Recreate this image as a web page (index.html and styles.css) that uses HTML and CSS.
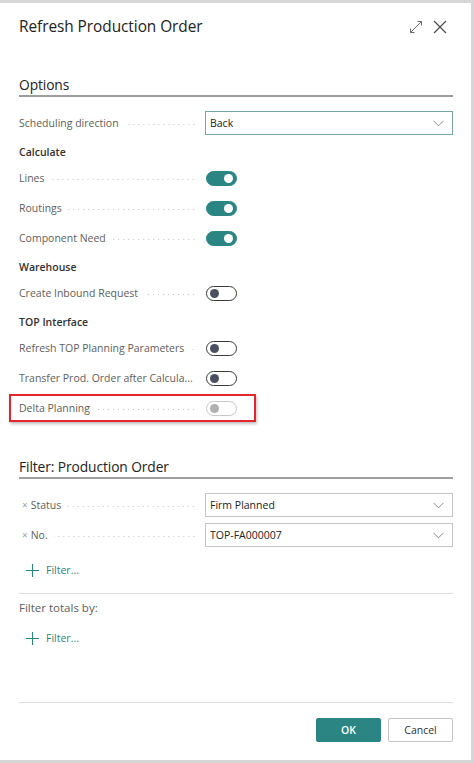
FILE: index.html
```html
<!DOCTYPE html>
<html>
<head>
<meta charset="utf-8">
<link rel="stylesheet" href="styles.css">
</head>
<body>
<div class="dialog">
  <div class="titlebar">
    <div class="title">Refresh Production Order</div>
    <div class="title-icons">
      <svg class="ico" width="14" height="14" viewBox="0 0 14 14"><path d="M1.5 12.5 L12.5 1.5 M1.5 12.5 L1.5 8.5 M1.5 12.5 L5.5 12.5 M12.5 1.5 L8.5 1.5 M12.5 1.5 L12.5 5.5" fill="none" stroke="#6b6b6b" stroke-width="1"/></svg>
      <svg class="ico" width="14" height="14" viewBox="0 0 14 14"><path d="M1 1 L13 13 M13 1 L1 13" fill="none" stroke="#4a4a4a" stroke-width="1.2"/></svg>
    </div>
  </div>

  <div class="content">
    <div class="section-head">Options</div>
    <div class="row">
      <div class="label"><span class="ltext">Scheduling direction</span><span class="dots"></span></div>
      <div class="select focused"><span>Back</span><svg class="chev" width="11" height="7" viewBox="0 0 11 7"><path d="M0.5 0.8 L5.5 5.8 L10.5 0.8" fill="none" stroke="#8a8a8a" stroke-width="1"/></svg></div>
    </div>

    <div class="group">Calculate</div>
    <div class="row">
      <div class="label"><span class="ltext">Lines</span><span class="dots"></span></div>
      <div class="toggle on"><span class="knob"></span></div>
    </div>
    <div class="row">
      <div class="label"><span class="ltext">Routings</span><span class="dots"></span></div>
      <div class="toggle on"><span class="knob"></span></div>
    </div>
    <div class="row">
      <div class="label"><span class="ltext">Component Need</span><span class="dots"></span></div>
      <div class="toggle on"><span class="knob"></span></div>
    </div>

    <div class="group">Warehouse</div>
    <div class="row">
      <div class="label"><span class="ltext">Create Inbound Request</span><span class="dots"></span></div>
      <div class="toggle"><span class="knob"></span></div>
    </div>

    <div class="group">TOP Interface</div>
    <div class="row">
      <div class="label"><span class="ltext">Refresh TOP Planning Parameters</span><span class="dots"></span></div>
      <div class="toggle"><span class="knob"></span></div>
    </div>
    <div class="row">
      <div class="label"><span class="ltext">Transfer Prod. Order after Calcula...</span><span class="dots"></span></div>
      <div class="toggle"><span class="knob"></span></div>
    </div>
    <div class="row highlight-row">
      <div class="label"><span class="ltext">Delta Planning</span><span class="dots"></span></div>
      <div class="toggle disabled"><span class="knob"></span></div>
      <div class="redbox"></div>
    </div>

    <div class="section-head second">Filter: Production Order</div>
    <div class="row">
      <div class="label"><span class="x">×</span><span class="ltext">Status</span><span class="dots"></span></div>
      <div class="select"><span>Firm Planned</span><svg class="chev" width="11" height="7" viewBox="0 0 11 7"><path d="M0.5 0.8 L5.5 5.8 L10.5 0.8" fill="none" stroke="#8a8a8a" stroke-width="1"/></svg></div>
    </div>
    <div class="row">
      <div class="label"><span class="x">×</span><span class="ltext">No.</span><span class="dots"></span></div>
      <div class="select"><span>TOP-FA000007</span><svg class="chev" width="11" height="7" viewBox="0 0 11 7"><path d="M0.5 0.8 L5.5 5.8 L10.5 0.8" fill="none" stroke="#8a8a8a" stroke-width="1"/></svg></div>
    </div>
    <div class="addfilter first">
      <svg width="13" height="13" viewBox="0 0 13 13"><path d="M6.5 0 V13 M0 6.5 H13" fill="none" stroke="#2b8583" stroke-width="1.1"/></svg>
      <span>Filter...</span>
    </div>
    <div class="sep"></div>
    <div class="totals">Filter totals by:</div>
    <div class="addfilter">
      <svg width="13" height="13" viewBox="0 0 13 13"><path d="M6.5 0 V13 M0 6.5 H13" fill="none" stroke="#2b8583" stroke-width="1.1"/></svg>
      <span>Filter...</span>
    </div>
  </div>

  <div class="footer">
    <button class="btn primary">OK</button>
    <button class="btn">Cancel</button>
  </div>
</div>
</body>
</html>
```
FILE: styles.css
```css
html, body {
  margin: 0;
  padding: 0;
}
body {
  background: #d6d6d6;
  padding: 3px 3px 3px 0;
  font-family: "Open Sans", "Noto Sans", sans-serif;
  color: #323130;
}
.dialog {
  width: 471px;
  height: 757px;
  background: #ffffff;
  box-sizing: border-box;
  padding: 0 18px 0 19px;
  display: flex;
  flex-direction: column;
}
.titlebar {
  display: flex;
  align-items: center;
  justify-content: space-between;
  padding-top: 14px;
  height: 20px;
}
.title {
  font-size: 15.4px;
  line-height: 20px;
  color: #222;
  letter-spacing: -0.05px;
}
.title-icons {
  display: flex;
  gap: 10px;
  margin-right: 6px;
  align-items: center;
}
.content {
  flex: 1;
  padding-top: 38px;
}
.section-head {
  font-size: 13.8px;
  line-height: 20px;
  color: #222;
  border-bottom: 2px solid #9e9e9e;
  margin-bottom: 11px;
  letter-spacing: -0.1px;
}
.section-head.second {
  margin-top: 34px;
}
.row {
  display: flex;
  align-items: center;
  height: 30px;
  position: relative;
}
.label {
  width: 186px;
  display: flex;
  align-items: center;
  padding-right: 7px;
  box-sizing: border-box;
  font-size: 10.5px;
  color: #605e5c;
  white-space: nowrap;
}
.ltext {
  flex: none;
}
.x {
  color: #a19f9d;
  font-size: 10px;
  margin: 0 3px 0 3px;
}
.dots {
  flex: 1;
  height: 1px;
  margin-left: 6px;
  margin-top: 3px;
  background-image: linear-gradient(to right, #c4c4c4 1px, transparent 1px);
  background-size: 5px 1px;
  background-repeat: repeat-x;
  background-position: right center;
}
.select {
  flex: 1;
  height: 24px;
  box-sizing: border-box;
  border: 1px solid #c4c4c4;
  display: flex;
  align-items: center;
  justify-content: space-between;
  padding: 0 8px 0 4px;
  font-size: 10.5px;
  color: #222;
}
.select.focused {
  border-color: #72a7a2;
}
.group {
  height: 25px;
  padding-top: 3px;
  line-height: 22px;
  box-sizing: border-box;
  font-size: 10.5px;
  font-weight: 600;
  color: #323130;
}
.toggle {
  width: 31px;
  height: 15px;
  box-sizing: border-box;
  border-radius: 8px;
  border: 1px solid #3b3a39;
  background: #fff;
  margin-left: 1px;
  position: relative;
}
.toggle .knob {
  position: absolute;
  top: 2px;
  left: 3px;
  width: 9px;
  height: 9px;
  border-radius: 50%;
  background: #4a505e;
}
.toggle.on {
  background: #2b8583;
  border-color: #2b8583;
}
.toggle.on .knob {
  left: auto;
  right: 3px;
  background: #fff;
}
.toggle.disabled {
  border-color: #c8c8c8;
}
.toggle.disabled .knob {
  background: #b0b0b0;
}
.redbox {
  position: absolute;
  left: -10px;
  top: 1px;
  width: 247px;
  height: 28px;
  box-sizing: border-box;
  border: 2px solid #e0262b;
  box-shadow: 1px 2px 3px rgba(0,0,0,0.25);
}
.addfilter {
  display: flex;
  align-items: center;
  height: 30px;
  margin-top: 5px;
  padding-left: 7px;
  gap: 7px;
  font-size: 10.5px;
  color: #2b8583;
}
.sep {
  height: 1px;
  background: #dedede;
  margin-top: 8px;
}
.totals {
  margin-top: 4px;
  line-height: 20px;
  font-size: 11.5px;
  color: #605e5c;
}
.footer {
  border-top: 1px solid #dedede;
  padding: 15px 0 18px 0;
  display: flex;
  justify-content: flex-end;
  gap: 7px;
}
.btn {
  width: 65px;
  height: 24px;
  box-sizing: border-box;
  border: 1px solid #c4c4c4;
  background: #fff;
  font-family: "Open Sans", "Noto Sans", sans-serif;
  font-size: 10.5px;
  color: #323130;
  padding: 0;
  border-radius: 2px;
}
.btn.primary {
  background: #2b8583;
  border-color: #2b8583;
  color: #fff;
  font-weight: 600;
}
```
